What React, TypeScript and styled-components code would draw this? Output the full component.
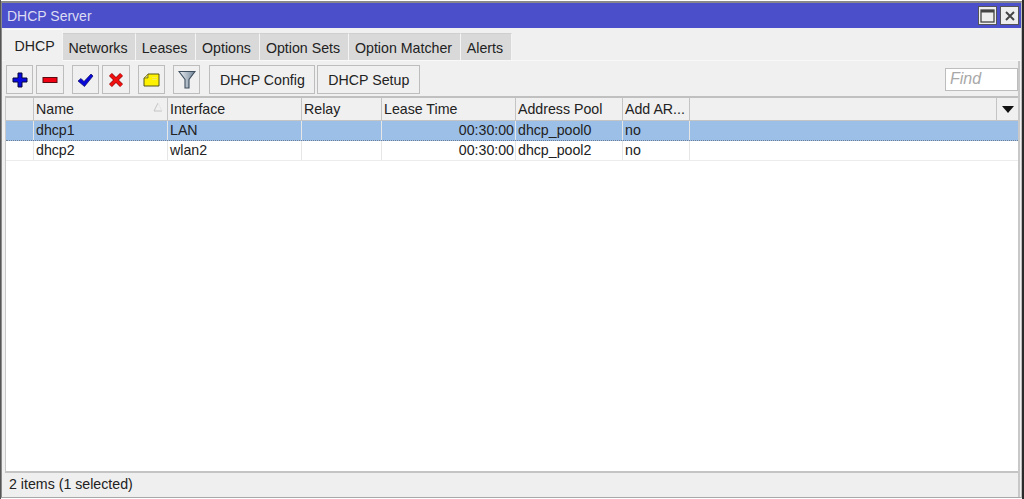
import React from 'react'
import styled, { createGlobalStyle } from 'styled-components'

const columns = '28px 134px 134px 80px 134px 107px 67px 1fr 21px'

const tabs = ['DHCP', 'Networks', 'Leases', 'Options', 'Option Sets', 'Option Matcher', 'Alerts']

const tabWidths = [58, 73, 60, 64, 89, 112, 51]

const rows = [
  { name: 'dhcp1', iface: 'LAN', time: '00:30:00', pool: 'dhcp_pool0', arp: 'no', selected: true },
  { name: 'dhcp2', iface: 'wlan2', time: '00:30:00', pool: 'dhcp_pool2', arp: 'no', selected: false },
]

const App: React.FC = () =>
  <>
    <GlobalStyle />
    <Screen>
      <Window>
        <TitleBar>
          <Title>DHCP Server</Title>
          <WindowButton aria-label="Maximize">
            <svg width="15" height="14" viewBox="0 0 15 14">
              <rect x="1" y="1" width="13" height="12" fill="none" stroke="#444" strokeWidth="1.3" />
              <rect x="1" y="1" width="13" height="2.5" fill="#444" />
            </svg>
          </WindowButton>
          <WindowButton aria-label="Close">
            <svg width="12" height="12" viewBox="0 0 12 12">
              <path d="M2 2 L10 10 M10 2 L2 10" stroke="#444" strokeWidth="1.9" />
            </svg>
          </WindowButton>
        </TitleBar>

        <TabBar>
          {tabs.map((tab, i) => (
            <Tab key={tab} $active={i === 0} $width={tabWidths[i]}>{tab}</Tab>
          ))}
        </TabBar>

        <Panel>
          <Toolbar>
            <ToolGroup>
              <IconButton aria-label="Add">
                <svg width="16" height="16" viewBox="0 0 16 16">
                  <path d="M6 1 H10 V6 H15 V10 H10 V15 H6 V10 H1 V6 H6 Z" fill="#0808e0" stroke="#06063a" strokeWidth="1" />
                </svg>
              </IconButton>
              <IconButton aria-label="Remove">
                <svg width="16" height="16" viewBox="0 0 16 16">
                  <rect x="1" y="5.5" width="14" height="5" fill="#f00010" stroke="#5a0a10" strokeWidth="1" />
                </svg>
              </IconButton>
            </ToolGroup>
            <ToolGroup>
              <IconButton aria-label="Enable">
                <svg width="17" height="16" viewBox="0 0 17 16">
                  <path d="M1 9 L4 6.5 L7 9.5 L14 2 L16 4 L7.5 14.5 Z" fill="#0808d8" stroke="#0a0a60" strokeWidth="0.7" />
                </svg>
              </IconButton>
              <IconButton aria-label="Disable">
                <svg width="16" height="16" viewBox="0 0 16 16">
                  <path d="M2.5 2.5 L13.5 13.5 M13.5 2.5 L2.5 13.5" stroke="#8a1010" strokeWidth="4.2" />
                  <path d="M2.5 2.5 L13.5 13.5 M13.5 2.5 L2.5 13.5" stroke="#f01010" strokeWidth="3" />
                </svg>
              </IconButton>
            </ToolGroup>
            <ToolGroup>
              <IconButton aria-label="Comment">
                <svg width="17" height="14" viewBox="0 0 17 14">
                  <path d="M5 1 H16 V13 H1 V5 Z" fill="#fff200" stroke="#55551a" strokeWidth="1" />
                  <path d="M5 1 L5 5 H1" fill="#d8d060" stroke="#55551a" strokeWidth="0.7" />
                  <path d="M9 4.5 H14 M9 6.5 H14" stroke="#f0e870" strokeWidth="0.8" />
                </svg>
              </IconButton>
            </ToolGroup>
            <ToolGroup>
              <IconButton aria-label="Filter">
                <svg width="18" height="19" viewBox="0 0 18 19">
                  <defs>
                    <linearGradient id="funnel" x1="0" x2="1" y1="0" y2="0">
                      <stop offset="0" stopColor="#eef2f6" />
                      <stop offset="1" stopColor="#6f8296" />
                    </linearGradient>
                  </defs>
                  <path d="M1 1.5 H17 L11 9.5 V18 H7 V9.5 Z" fill="url(#funnel)" stroke="#3f4f60" strokeWidth="1.1" />
                </svg>
              </IconButton>
            </ToolGroup>
            <TextGroup>
              <TextButton $width={106}>DHCP Config</TextButton>
              <TextButton $width={103}>DHCP Setup</TextButton>
            </TextGroup>
            <FindBox>Find</FindBox>
          </Toolbar>

          <TableArea>
            <HeaderRow>
              <HeaderCell />
              <HeaderCell>
                Name
                <SortMark viewBox="0 0 10 10" width="10" height="10">
                  <path d="M5 1 L1 9 H9" fill="none" stroke="#c4c4c4" strokeWidth="1" />
                  <path d="M5 1 L9 9" fill="none" stroke="#e4e4e4" strokeWidth="1" />
                </SortMark>
              </HeaderCell>
              <HeaderCell>Interface</HeaderCell>
              <HeaderCell>Relay</HeaderCell>
              <HeaderCell>Lease Time</HeaderCell>
              <HeaderCell>Address Pool</HeaderCell>
              <HeaderCell>Add AR...</HeaderCell>
              <HeaderCell />
              <MenuCell>
                <svg width="12" height="7" viewBox="0 0 12 7">
                  <path d="M0 0 H12 L6 7 Z" fill="#111" />
                </svg>
              </MenuCell>
            </HeaderRow>
            {rows.map(row => (
              <DataRow key={row.name} $selected={row.selected}>
                <DataCell />
                <DataCell>{row.name}</DataCell>
                <DataCell>{row.iface}</DataCell>
                <DataCell />
                <TimeCell>{row.time}</TimeCell>
                <DataCell>{row.pool}</DataCell>
                <DataCell>{row.arp}</DataCell>
                <LastCell />
              </DataRow>
            ))}
          </TableArea>

          <StatusBar>2 items (1 selected)</StatusBar>
        </Panel>
      </Window>
    </Screen>
  </>

const GlobalStyle = createGlobalStyle`
  html, body {
    margin: 0;
    background: #fff;
  }

  * {
    box-sizing: border-box;
  }
`

const Screen = styled.div`
  width: 1024px;
  height: 499px;
  padding-top: 1px;
  overflow: hidden;
  border-left: 1px solid #555;
  border-right: 2px solid #2a2a2a;
  font-family: "Liberation Sans", Arial, sans-serif;
  font-size: 14.2px;
  color: #222;
`

const Window = styled.div`
  height: 497px;
  display: flex;
  flex-direction: column;
  background: #f0f0f0;
  border: 1px solid #8a8a8a;
  border-top: 2px solid #8a8a8a;
  border-right-color: #bcbcbc;
  border-bottom-color: #a8a8a8;
`

const TitleBar = styled.div`
  height: 25px;
  flex: none;
  display: flex;
  align-items: center;
  gap: 3px;
  padding: 0 2px 0 5px;
  background: #4b4fc9;
`

const Title = styled.div`
  flex: 1;
  font-size: 14px;
  color: #dcdcf4;
`

const WindowButton = styled.div`
  width: 19px;
  height: 19px;
  display: flex;
  align-items: center;
  justify-content: center;
  background: #eeeeee;
  border: 1px solid #555;
`

const TabBar = styled.div`
  height: 33px;
  flex: none;
  display: flex;
  align-items: flex-end;
  padding-left: 3px;
  border-bottom: 1px solid #f8f8f8;
`

const Tab = styled.div<{ $active: boolean; $width: number }>`
  width: ${ p => p.$width }px;
  height: ${ p => p.$active ? 32 : 27 }px;
  display: flex;
  align-items: center;
  justify-content: center;
  padding: ${ p => p.$active ? '0 0 0 2px' : '1px 2px 0 0' };
  background: ${ p => p.$active ? '#f0f0f0' : '#d9d9d9' };
  border-right: 1px solid #f4f4f4;
  border-top: 1px solid ${ p => p.$active ? '#fafafa' : '#cfcfcf' };
  margin-bottom: ${ p => p.$active ? -1 : 0 }px;
  position: relative;
`

const Panel = styled.div`
  flex: 1;
  min-height: 0;
  display: flex;
  flex-direction: column;
  margin-right: 1px;
  border-right: 2px solid #c8c8c8;
`

const Toolbar = styled.div`
  height: 35px;
  flex: none;
  display: flex;
  align-items: flex-start;
  gap: 8px;
  padding: 4px 0 0 4px;
`

const ToolGroup = styled.div`
  display: flex;
  gap: 3px;
`

const TextGroup = styled.div`
  display: flex;
  gap: 2px;
  margin-left: 1px;
`

const IconButton = styled.div`
  width: 27.4px;
  height: 29px;
  display: flex;
  align-items: center;
  justify-content: center;
  border: 1px solid #bdbdbd;
  background: #f0f0f0;
`

const TextButton = styled.div<{ $width: number }>`
  width: ${ p => p.$width }px;
  height: 29px;
  display: flex;
  align-items: center;
  justify-content: center;
  border: 1px solid #bdbdbd;
  background: #f0f0f0;
`

const FindBox = styled.div`
  width: 73px;
  height: 23px;
  margin: 3px 0 0 auto;
  padding: 1px 4px;
  background: #fff;
  border: 1px solid #bdbdbd;
  font-size: 16px;
  font-style: italic;
  color: #a8a8a8;
`

const TableArea = styled.div`
  flex: 1;
  margin-left: 3px;
  display: flex;
  flex-direction: column;
  background: #fff;
  border-top: 2px solid #c0c0c0;
  border-left: 1px solid #c8c8c8;
  border-bottom: 2px solid #c4c4c4;
`

const HeaderRow = styled.div`
  height: 23px;
  flex: none;
  display: grid;
  grid-template-columns: ${ columns };
  background: #f0f0f0;
`

const HeaderCell = styled.div`
  position: relative;
  padding: 3px 0 0 2px;
  border-right: 1px solid #c4c4c4;
  border-bottom: 1px solid #c4c4c4;
  white-space: nowrap;
`

const SortMark = styled.svg`
  position: absolute;
  top: 4px;
  right: 4px;
`

const MenuCell = styled.div`
  display: flex;
  align-items: center;
  justify-content: center;
  border-bottom: 1px solid #c4c4c4;
`

const DataRow = styled.div<{ $selected: boolean }>`
  height: 20px;
  flex: none;
  display: grid;
  grid-template-columns: ${ columns };
  background: ${ p => p.$selected ? '#9cbfe8' : '#fff' };
  border-bottom: 1px ${ p => p.$selected ? 'dotted #6e7f96' : 'solid #ececec' };
`

const DataCell = styled.div`
  padding: 1px 0 0 2px;
  border-right: 1px solid #e6e6e6;
  white-space: nowrap;
`

const TimeCell = styled(DataCell)`
  padding: 1px 1px 0 0;
  text-align: right;
`

const LastCell = styled.div`
  grid-column: span 2;
`

const StatusBar = styled.div`
  height: 24px;
  flex: none;
  padding: 3px 0 0 7px;
  background: #efefef;
`

export default App
